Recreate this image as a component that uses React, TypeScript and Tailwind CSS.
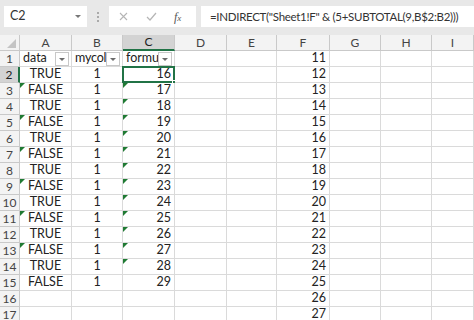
import type { ReactNode } from 'react'

const COLS = ['A', 'B', 'C', 'D', 'E', 'F', 'G', 'H', 'I']
const ROW_COUNT = 17

const GRID = 'grid grid-cols-[20px_52px_51px_52px_52px_50px_53px_51px_51px_1fr]'

// error-indicator triangles (little green corners)
const A_FLAGS = [3, 5, 7, 9, 11, 13]
const C_FLAGS = [3, 4, 5, 6, 7, 8, 9, 10, 11, 12, 13, 14]

function Flag() {
  return (
    <span className="absolute left-0 top-0 h-0 w-0 border-r-[5px] border-t-[5px] border-r-transparent border-t-[#1f7a33]" />
  )
}

function FilterButton() {
  return (
    <span className="absolute right-[2px] top-[1px] flex h-[14px] w-[14px] items-center justify-center border border-[#c8c8c8] bg-white">
      <span className="h-0 w-0 border-x-[3px] border-t-[3px] border-x-transparent border-t-[#6b6b6b]" />
    </span>
  )
}

function Cell({ children, className = '', flag = false }: { children?: ReactNode; className?: string; flag?: boolean }) {
  return (
    <div className={`relative flex h-4 items-center whitespace-nowrap border-b border-r border-[#dadada] bg-white px-[3px] leading-none ${className}`}>
      {flag ? <Flag /> : null}
      {children}
    </div>
  )
}

export default function App() {
  const rows = Array.from({ length: ROW_COUNT }, (_, i) => i + 1)

  return (
    <main className="h-[320px] w-[474px] overflow-hidden bg-white font-['Lato','Liberation_Sans',sans-serif] text-[12.5px] text-[#222]">
      {/* formula bar */}
      <div className="flex h-[35px] items-center bg-[#e8e8e8] pb-[2px]">
        <div className="ml-[4px] flex h-[21px] w-[83px] items-center justify-between bg-white pl-[6px] pr-[6px] text-[12.5px] text-[#333]">
          <span>C2</span>
          <span className="h-0 w-0 border-x-[3px] border-t-[3px] border-x-transparent border-t-[#777]" />
        </div>
        <div className="mx-[9px] flex w-[3px] flex-col items-center gap-[2px]">
          <span className="h-[2px] w-[2px] bg-[#aaa]" />
          <span className="h-[2px] w-[2px] bg-[#aaa]" />
          <span className="h-[2px] w-[2px] bg-[#aaa]" />
        </div>
        <div className="ml-[1px] flex h-[21px] w-[87px] items-center bg-white">
          <svg className="ml-[10px]" width="9" height="9" viewBox="0 0 9 9" fill="none" stroke="#b5b5b5" strokeWidth="1.1">
            <path d="M1 1l7 7M8 1l-7 7" />
          </svg>
          <svg className="ml-[18px]" width="11" height="9" viewBox="0 0 11 9" fill="none" stroke="#b5b5b5" strokeWidth="1.2">
            <path d="M1 5l3 3 6-7" />
          </svg>
          <span className="ml-[17px] font-['Liberation_Serif',serif] text-[12px] italic text-[#555]">
            f<span className="text-[9px]">x</span>
          </span>
        </div>
        <div className="ml-[5px] flex h-[21px] flex-1 items-center overflow-hidden whitespace-nowrap bg-white pl-[9px] text-[11.5px] tracking-[-0.3px] text-[#333]">
          =INDIRECT("Sheet1!F" &amp; (5+SUBTOTAL(9,B$2:B2)))
        </div>
      </div>

      {/* column headers */}
      <div className={`${GRID} h-4`}>
        <div className="relative border-b border-r border-[#c9c9c9] bg-[#f3f3f3]">
          <span className="absolute bottom-[2px] right-[3px] h-0 w-0 border-b-[9px] border-l-[9px] border-b-[#c4c4c4] border-l-transparent" />
        </div>
        {COLS.map((col) => (
          <div
            key={col}
            className={`flex items-center justify-center border-r text-[12px] leading-none ${
              col === 'C'
                ? 'border-b-2 border-b-[#217346] border-r-[#c9c9c9] bg-[#d3d3d3] text-[#222]'
                : 'border-b border-[#c9c9c9] bg-[#f3f3f3] text-[#444]'
            }`}
          >
            {col}
          </div>
        ))}
      </div>

      {/* rows */}
      {rows.map((r) => {
        const isHeader = r === 1
        const hasData = r >= 2 && r <= 15
        const bool = r % 2 === 0 ? 'TRUE' : 'FALSE'
        return (
          <div key={r} className={GRID}>
            <div
              className={`flex h-4 items-center justify-center border-b text-[12px] leading-none ${
                r === 2
                  ? 'border-r-2 border-b-[#c9c9c9] border-r-[#217346] bg-[#d3d3d3] text-[#222]'
                  : 'border-r border-[#c9c9c9] bg-[#f3f3f3] text-[#444]'
              }`}
            >
              {r}
            </div>

            {/* A */}
            <Cell className={isHeader ? '' : 'justify-center'} flag={A_FLAGS.includes(r)}>
              {isHeader ? (
                <>
                  <span>data</span>
                  <FilterButton />
                </>
              ) : hasData ? (
                bool
              ) : null}
            </Cell>

            {/* B */}
            <Cell className={isHeader ? '' : 'justify-center'}>
              {isHeader ? (
                <>
                  <span className="tracking-[-0.2px]">mycol</span>
                  <FilterButton />
                </>
              ) : hasData ? (
                '1'
              ) : null}
            </Cell>

            {/* C */}
            <Cell className={isHeader ? 'overflow-hidden' : 'justify-end'} flag={C_FLAGS.includes(r)}>
              {isHeader ? (
                <>
                  <span>formula</span>
                  <FilterButton />
                </>
              ) : hasData ? (
                r + 14
              ) : null}
              {r === 2 ? (
                <span className="absolute -left-px -top-px bottom-[-1px] right-[-1px] border-2 border-[#217346]">
                  <span className="absolute -bottom-[4px] -right-[4px] h-[5px] w-[5px] border border-white bg-[#217346]" />
                </span>
              ) : null}
            </Cell>

            {/* D, E */}
            <Cell />
            <Cell />
            {/* F */}
            <Cell className="justify-end">{r + 10}</Cell>
            {/* G, H, I */}
            <Cell />
            <Cell />
            <Cell />
          </div>
        )
      })}
    </main>
  )
}
